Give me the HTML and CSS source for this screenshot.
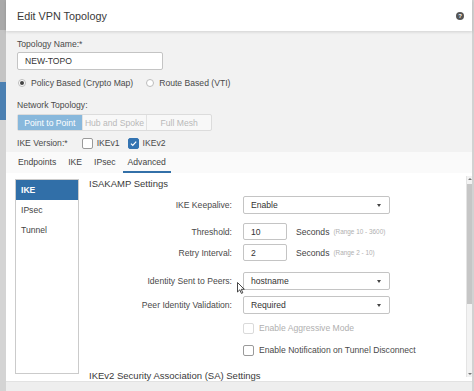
FILE: index.html
```html
<!DOCTYPE html>
<html lang="en">
<head>
  <meta charset="UTF-8" />
  <meta name="viewport" content="width=device-width, initial-scale=1.0" />
  <title>Edit VPN Topology</title>
  <link rel="stylesheet" href="styles.css">
</head>
<body>
  <div class="screen">
    <div class="backdrop">
      <span class="bd-top"></span>
      <span class="bd-mid"></span>
      <span class="bd-blue"></span>
      <span class="bd-low"></span>
    </div>

    <div class="modal">
      <header class="modal-head">
        <h1>Edit VPN Topology</h1>
        <span class="help">?</span>
      </header>

      <section class="general">
        <div class="field-label">Topology Name:*</div>
        <div class="text-input name-input">NEW-TOPO</div>

        <div class="radio-row">
          <span class="radio checked"></span><span class="radio-text">Policy Based (Crypto Map)</span>
          <span class="radio route"></span><span class="radio-text">Route Based (VTI)</span>
        </div>

        <div class="field-label net-label">Network Topology:</div>
        <div class="segmented">
          <span class="seg active">Point to Point</span>
          <span class="seg">Hub and Spoke</span>
          <span class="seg">Full Mesh</span>
        </div>

        <div class="ike-row">
          <span class="ike-label">IKE Version:*</span>
          <span class="check"></span><span class="check-text">IKEv1</span>
          <span class="check checked">
            <svg viewBox="0 0 12 12" width="11" height="11"><path d="M2.6 6.2 L5 8.6 L9.6 3.4" fill="none" stroke="#fff" stroke-width="1.6"/></svg>
          </span><span class="check-text">IKEv2</span>
        </div>
      </section>

      <nav class="tabs">
        <span class="tab">Endpoints</span>
        <span class="tab">IKE</span>
        <span class="tab">IPsec</span>
        <span class="tab active">Advanced</span>
      </nav>

      <section class="tab-body">
        <ul class="side-menu">
          <li class="selected">IKE</li>
          <li>IPsec</li>
          <li>Tunnel</li>
        </ul>

        <div class="pane">
          <h2 class="pane-title">ISAKAMP Settings</h2>

          <div class="form-row row-keepalive">
            <span class="row-label">IKE Keepalive:</span>
            <div class="select"><span>Enable</span><i class="caret"></i></div>
          </div>

          <div class="form-row row-threshold">
            <span class="row-label">Threshold:</span>
            <div class="unit-field">
              <div class="text-input small-input">10</div>
              <span class="unit">Seconds</span>
              <span class="range">(Range 10 - 3600)</span>
            </div>
          </div>

          <div class="form-row row-retry">
            <span class="row-label">Retry Interval:</span>
            <div class="unit-field">
              <div class="text-input small-input">2</div>
              <span class="unit">Seconds</span>
              <span class="range">(Range 2 - 10)</span>
            </div>
          </div>

          <div class="form-row row-identity">
            <span class="row-label">Identity Sent to Peers:</span>
            <div class="select"><span>hostname</span><i class="caret"></i></div>
          </div>

          <div class="form-row row-peer">
            <span class="row-label">Peer Identity Validation:</span>
            <div class="select"><span>Required</span><i class="caret"></i></div>
          </div>

          <div class="check-row row-aggressive disabled">
            <span class="check"></span><span>Enable Aggressive Mode</span>
          </div>

          <div class="check-row row-notify">
            <span class="check"></span><span>Enable Notification on Tunnel Disconnect</span>
          </div>

          <h2 class="pane-title sa-title">IKEv2 Security Association (SA) Settings</h2>
        </div>

        <div class="scrollbar">
          <i class="arrow up"></i>
          <span class="thumb"></span>
          <span class="track-rest"></span>
          <i class="arrow down"></i>
        </div>
      </section>

      <footer class="modal-foot"></footer>
    </div>

    <div class="edge"></div>
  </div>

  <svg class="cursor" viewBox="0 0 8 12" width="8" height="12">
    <path d="M0.5 0.5 L0.5 10 L2.8 7.8 L4.4 11.4 L5.8 10.8 L4.3 7.3 L7.3 7.3 Z" fill="#fff" stroke="#333" stroke-width="0.9" stroke-linejoin="round"/>
  </svg>
</body>
</html>
```

FILE: styles.css
```css
* {
  box-sizing: border-box;
}
body {
  margin: 0;
  width: 474px;
  height: 391px;
  overflow: hidden;
  position: relative;
  font-family: 'Liberation Sans', Arial, sans-serif;
  font-size: 8.6px;
  color: #4a4a4a;
  background: #d8d8d8;
}
.screen {
  display: flex;
  height: 391px;
}
.backdrop {
  width: 6px;
  display: flex;
  flex-direction: column;
}
.bd-top {
  height: 30px;
  background: #a9a9a9;
}
.bd-mid {
  height: 52px;
  background: #c4c4c4;
}
.bd-blue {
  height: 38px;
  background: #4b80b2;
}
.bd-low {
  flex: 1;
  background: #d4d4d4;
}
.edge {
  width: 2px;
  background: #d2d2d2;
}
.modal {
  flex: 1;
  display: flex;
  flex-direction: column;
  background: #f2f2f2;
}

/* header */
.modal-head {
  height: 31px;
  flex-shrink: 0;
  display: flex;
  align-items: center;
  justify-content: space-between;
  padding: 0 8px 0 11px;
  background: #fff;
  box-shadow: 0 1px 3px rgba(0,0,0,0.14);
  position: relative;
  z-index: 1;
}
.modal-head h1 {
  margin: 0;
  font-size: 10.8px;
  font-weight: normal;
  color: #3a3a3a;
}
.help {
  width: 8px;
  height: 8px;
  border-radius: 50%;
  background: #555;
  color: #fff;
  font-size: 6px;
  font-weight: bold;
  line-height: 8px;
  text-align: center;
}

/* general block */
.general {
  padding: 8px 11px 3px;
}
.field-label {
  line-height: 11px;
}
.text-input {
  height: 18px;
  background: #fff;
  border: 1px solid #c4c4c4;
  border-radius: 2px;
  padding-left: 7px;
  display: flex;
  align-items: center;
  color: #333;
}
.name-input {
  width: 146px;
  margin-top: 2px;
}
.radio-row {
  margin-top: 7px;
  height: 12px;
  display: flex;
  align-items: center;
}
.radio {
  width: 8px;
  height: 8px;
  margin-left: 1px;
  border-radius: 50%;
  border: 1px solid #bcbcbc;
  background: #fff;
  display: flex;
  align-items: center;
  justify-content: center;
}
.radio.checked::before {
  content: '';
  width: 4px;
  height: 4px;
  border-radius: 50%;
  background: #444;
}
.radio-text {
  margin-left: 5px;
}
.radio.route {
  margin-left: 13px;
}
.net-label {
  margin-top: 11px;
}
.segmented {
  margin-top: 3px;
  width: 195px;
  height: 17px;
  display: flex;
  border: 1px solid #dcdcdc;
  border-radius: 2px;
  background: #f8f8f8;
}
.seg {
  flex: 1;
  display: flex;
  align-items: center;
  justify-content: center;
  color: #b8b8b8;
  border-left: 1px solid #e2e2e2;
}
.seg:first-child {
  border-left: none;
}
.seg.active {
  background: #88b8dc;
  color: #fff;
}
.ike-row {
  margin-top: 6px;
  height: 12px;
  display: flex;
  align-items: center;
}
.ike-label {
  margin-right: 14px;
}
.check {
  width: 11px;
  height: 11px;
  flex-shrink: 0;
  border: 1px solid #9a9a9a;
  border-radius: 2px;
  background: #fff;
  display: flex;
  align-items: center;
  justify-content: center;
}
.check.checked {
  background: #3474b2;
  border-color: #3474b2;
}
.check.checked svg {
  display: block;
}
.check-text {
  margin-left: 4px;
  margin-right: 8px;
}

/* tabs */
.tabs {
  height: 21px;
  flex-shrink: 0;
  display: flex;
  gap: 2px;
  padding-left: 7px;
  background: #fafafa;
}
.tab {
  padding: 0 5px;
  display: flex;
  align-items: center;
  color: #444;
  border-bottom: 2px solid transparent;
}
.tab.active {
  border-bottom-color: #3370a8;
}

/* tab body */
.tab-body {
  flex: 1;
  display: flex;
  padding-left: 9px;
  background: #fff;
  overflow: hidden;
}
.side-menu {
  list-style: none;
  margin: 6px 0 0;
  padding: 0;
  width: 64px;
  height: 195px;
  flex-shrink: 0;
  border: 1px solid #cbcbcb;
}
.side-menu li {
  height: 20px;
  line-height: 20px;
  padding-left: 5px;
  color: #444;
}
.side-menu li.selected {
  background: #316fa8;
  color: #fff;
  font-weight: bold;
}
.pane {
  flex: 1;
  margin-left: 10px;
  padding-top: 5px;
  overflow: hidden;
}
.pane-title {
  margin: 0;
  font-size: 9.5px;
  font-weight: normal;
  line-height: 12px;
  color: #3a3a3a;
}
.form-row {
  display: grid;
  grid-template-columns: 143px auto;
  column-gap: 11px;
  align-items: center;
}
.row-label {
  text-align: right;
}
.select {
  width: 147px;
  height: 18px;
  border: 1px solid #c4c4c4;
  border-radius: 2px;
  background: #fff;
  padding: 0 8px 0 7px;
  display: flex;
  align-items: center;
  justify-content: space-between;
  color: #333;
}
.caret {
  width: 0;
  height: 0;
  border-left: 2.5px solid transparent;
  border-right: 2.5px solid transparent;
  border-top: 3px solid #444;
}
.unit-field {
  display: flex;
  align-items: center;
}
.small-input {
  width: 44px;
  height: 17px;
}
.unit {
  margin-left: 9px;
  color: #444;
}
.range {
  margin-left: 4px;
  font-size: 6.4px;
  color: #b0b0b0;
}
.row-keepalive { margin-top: 6px; }
.row-threshold { margin-top: 9px; }
.row-retry { margin-top: 4px; }
.row-identity { margin-top: 11px; }
.row-peer { margin-top: 6px; }
.check-row {
  margin-left: 154px;
  height: 12px;
  display: flex;
  align-items: center;
  gap: 5px;
}
.check-row.disabled {
  color: #b0b0b0;
}
.check-row.disabled .check {
  border-color: #dadada;
}
.row-aggressive { margin-top: 8px; }
.row-notify { margin-top: 10px; }
.sa-title { margin-top: 14px; }

/* scrollbar */
.scrollbar {
  width: 6px;
  margin: 3px 0 4px;
  display: flex;
  flex-direction: column;
  align-items: center;
  background: #f3f3f3;
  border-left: 1px solid #e4e4e4;
}
.arrow {
  width: 0;
  height: 0;
  margin: 2px 0;
  border-left: 2px solid transparent;
  border-right: 2px solid transparent;
}
.arrow.up {
  border-bottom: 2px solid #777;
}
.arrow.down {
  border-top: 2px solid #777;
}
.thumb {
  width: 5px;
  height: 120px;
  margin-top: 2px;
  background: #c6c6c6;
}
.track-rest {
  flex: 1;
}

.modal-foot {
  height: 10px;
  flex-shrink: 0;
  background: #eeeeee;
  border-top: 1px solid #e2e2e2;
}

/* mouse pointer over the identity field */
.cursor {
  position: absolute;
  left: 237px;
  top: 282px;
}
```
